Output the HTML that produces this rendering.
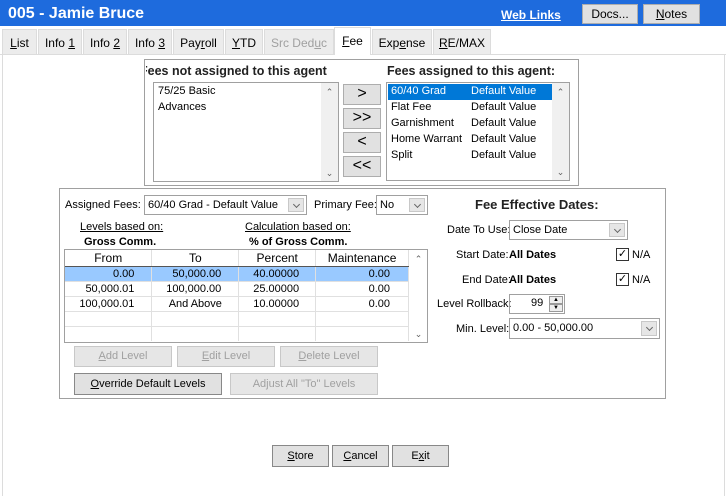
<!DOCTYPE html><html><head><style>
*{box-sizing:border-box;margin:0;padding:0}
body{width:726px;height:496px;background:#fff;font-family:"Liberation Sans",Arial,sans-serif;font-size:11px;color:#000;position:relative;overflow:hidden}
.a{position:absolute}
.btn{position:absolute;background:#e1e1e1;border:1px solid #adadad;text-align:center;font-size:11px}
.dis{color:#a0a0a0;background:#e6e6e6;border-color:#c8c8c8}
.tab{position:absolute;top:29px;height:25px;background:#ececec;border:1px solid #dcdcdc;border-bottom:none;font-size:12px;line-height:26px;text-align:center;white-space:nowrap}
.dd{position:absolute;background:#fff;border:1px solid #a0a0a0;padding-left:3px}
.dd i{position:absolute;right:2px;top:2px;bottom:2px;width:16px;background:#e6e6e6;border:1px solid #c8c8c8}
.dd i:after{content:"";position:absolute;left:5px;top:3px;width:4px;height:4px;border-right:1px solid #666;border-bottom:1px solid #666;transform:rotate(45deg)}
.sb{position:absolute;background:#f0f0f0;width:17px;font-size:9px;color:#606060;text-align:center}
td{border-right:1px solid #e0e0e0;border-bottom:1px solid #e0e0e0;height:15px;padding:0 6px;font-size:11px}
</style></head><body>
<div class="a" style="left:0;top:0;width:726px;height:26px;background:#1e6bdd"></div>
<div class="a" style="left:8px;top:5px;color:#fff;font-weight:bold;font-size:16px">005 - Jamie Bruce</div>
<div class="a" style="left:501px;top:8px;color:#fff;font-weight:bold;font-size:12px;text-decoration:underline">Web Links</div>
<div class="btn" style="left:582px;top:4px;width:56px;height:20px;line-height:18px;font-size:12px">Docs...</div>
<div class="btn" style="left:643px;top:4px;width:57px;height:20px;line-height:18px;font-size:12px"><u>N</u>otes</div>
<div class="tab" style="left:2px;width:35px"><u>L</u>ist</div>
<div class="tab" style="left:38px;width:44px">Info <u>1</u></div>
<div class="tab" style="left:83px;width:44px">Info <u>2</u></div>
<div class="tab" style="left:128px;width:44px">Info <u>3</u></div>
<div class="tab" style="left:173px;width:51px">Pay<u>r</u>oll</div>
<div class="tab" style="left:225px;width:38px"><u>Y</u>TD</div>
<div class="tab" style="left:264px;width:70px;color:#a0a0a0">Src Ded<u>u</u>c</div>
<div class="tab" style="left:334px;width:37px;background:#fff;top:27px;height:28px;z-index:2"><u>F</u>ee</div>
<div class="tab" style="left:372px;width:60px">Exp<u>e</u>nse</div>
<div class="tab" style="left:433px;width:58px"><u>R</u>E/MAX</div>
<div class="a" style="left:0;top:54px;width:726px;height:1px;background:#dcdcdc"></div>
<div class="a" style="left:2px;top:54px;width:1px;height:442px;background:#dcdcdc"></div>
<div class="a" style="left:724px;top:54px;width:1px;height:442px;background:#dcdcdc"></div>

<div class="a" style="left:144px;top:59px;width:435px;height:127px;border:1px solid #a0a0a0"></div>
<div class="a" style="left:146px;top:64px;width:193px;height:16px;overflow:hidden"><div class="a" style="left:-6px;top:0;font-weight:bold;font-size:12.5px;color:#222;white-space:nowrap">Fees not assigned to this agent</div></div>
<div class="a" style="left:153px;top:82px;width:186px;height:100px;border:1px solid #a0a0a0"></div>
<div class="a" style="left:158px;top:85px">75/25 Basic</div>
<div class="a" style="left:158px;top:101px">Advances</div>
<div class="sb" style="left:321px;top:83px;height:98px"><div style="margin-top:4px">&#8963;</div><div style="position:absolute;bottom:2px;width:17px">&#8964;</div></div>
<div class="btn" style="left:343px;top:84px;width:38px;height:21px;font-size:16px;line-height:18px">&gt;</div>
<div class="btn" style="left:343px;top:108px;width:38px;height:21px;font-size:16px;line-height:18px">&gt;&gt;</div>
<div class="btn" style="left:343px;top:132px;width:38px;height:21px;font-size:16px;line-height:18px">&lt;</div>
<div class="btn" style="left:343px;top:156px;width:38px;height:21px;font-size:16px;line-height:18px">&lt;&lt;</div>
<div class="a" style="left:387px;top:64px;font-weight:bold;font-size:12.5px;color:#222">Fees assigned to this agent:</div>
<div class="a" style="left:386px;top:82px;width:184px;height:99px;border:1px solid #a0a0a0"></div>
<div class="a" style="left:388px;top:84px;width:164px;height:16px;background:#0078d7"></div>
<div class="a" style="left:391px;top:85px;color:#fff">60/40 Grad</div><div class="a" style="left:471px;top:85px;color:#fff">Default Value</div>
<div class="a" style="left:391px;top:101px">Flat Fee</div><div class="a" style="left:471px;top:101px">Default Value</div>
<div class="a" style="left:391px;top:117px">Garnishment</div><div class="a" style="left:471px;top:117px">Default Value</div>
<div class="a" style="left:391px;top:133px">Home Warrant</div><div class="a" style="left:471px;top:133px">Default Value</div>
<div class="a" style="left:391px;top:149px">Split</div><div class="a" style="left:471px;top:149px">Default Value</div>
<div class="sb" style="left:552px;top:83px;height:97px"><div style="margin-top:4px">&#8963;</div><div style="position:absolute;bottom:2px;width:17px">&#8964;</div></div>

<div class="a" style="left:59px;top:188px;width:607px;height:211px;border:1px solid #a0a0a0"></div>
<div class="a" style="left:65px;top:199px">Assigned Fees:</div>
<div class="dd" style="left:144px;top:195px;width:163px;height:20px;line-height:18px">60/40 Grad - Default Value<i></i></div>
<div class="a" style="left:314px;top:199px">Primary Fee:</div>
<div class="dd" style="left:376px;top:195px;width:52px;height:20px;line-height:18px">No<i></i></div>
<div class="a" style="left:80px;top:221px;text-decoration:underline">Levels based on:</div>
<div class="a" style="left:245px;top:221px;text-decoration:underline">Calculation based on:</div>
<div class="a" style="left:84px;top:236px;font-weight:bold">Gross Comm.</div>
<div class="a" style="left:249px;top:236px;font-weight:bold">% of Gross Comm.</div>
<div class="a" style="left:64px;top:249px;width:364px;height:94px;border:1px solid #a0a0a0"></div>
<table class="a" style="left:65px;top:250px;border-collapse:collapse;width:344px">
<tr style="height:16px;font-size:12px"><td style="width:87px;text-align:center;font-size:12px;border-bottom:1px solid #555">From</td><td style="width:87px;text-align:center;font-size:12px;border-bottom:1px solid #555">To</td><td style="width:77px;text-align:center;font-size:12px;border-bottom:1px solid #555">Percent</td><td style="width:93px;text-align:center;font-size:12px;border-bottom:1px solid #555">Maintenance</td></tr>
<tr style="background:#99c9ff"><td style="text-align:right;padding-right:17px">0.00</td><td style="text-align:right;padding-right:17px">50,000.00</td><td style="padding-left:14px">40.00000</td><td style="text-align:right;padding-right:18px">0.00</td></tr>
<tr><td style="text-align:right;padding-right:17px">50,000.01</td><td style="text-align:right;padding-right:17px">100,000.00</td><td style="padding-left:14px">25.00000</td><td style="text-align:right;padding-right:18px">0.00</td></tr>
<tr><td style="text-align:right;padding-right:17px">100,000.01</td><td style="text-align:center">And Above</td><td style="padding-left:14px">10.00000</td><td style="text-align:right;padding-right:18px">0.00</td></tr>
<tr><td></td><td></td><td></td><td></td></tr>
<tr><td style="border-bottom:none"></td><td style="border-bottom:none"></td><td style="border-bottom:none"></td><td style="border-bottom:none"></td></tr>
</table>
<div class="sb" style="left:410px;top:250px;height:92px;background:#fff"><div style="margin-top:4px">&#8963;</div><div style="position:absolute;bottom:2px;width:17px">&#8964;</div></div>
<div class="btn dis" style="left:74px;top:346px;width:98px;height:21px;line-height:19px"><u>A</u>dd Level</div>
<div class="btn dis" style="left:177px;top:346px;width:98px;height:21px;line-height:19px"><u>E</u>dit Level</div>
<div class="btn dis" style="left:280px;top:346px;width:98px;height:21px;line-height:19px"><u>D</u>elete Level</div>
<div class="btn" style="left:74px;top:373px;width:148px;height:22px;line-height:20px;border-color:#888"><u>O</u>verride Default Levels</div>
<div class="btn dis" style="left:230px;top:373px;width:148px;height:22px;line-height:20px">Adjust All "To" Levels</div>

<div class="a" style="left:475px;top:197px;font-weight:bold;font-size:13px;color:#222">Fee Effective Dates:</div>
<div class="a" style="left:447px;top:224px">Date To Use:</div>
<div class="dd" style="left:509px;top:220px;width:119px;height:20px;line-height:18px">Close Date<i></i></div>
<div class="a" style="left:456px;top:249px">Start Date:</div><div class="a" style="left:509px;top:249px;font-weight:bold">All Dates</div>
<div class="a" style="left:616px;top:248px;width:13px;height:13px;border:1px solid #333;font-size:11px;line-height:11px;text-align:center">&#10003;</div><div class="a" style="left:632px;top:249px">N/A</div>
<div class="a" style="left:462px;top:274px">End Date:</div><div class="a" style="left:509px;top:274px;font-weight:bold">All Dates</div>
<div class="a" style="left:616px;top:273px;width:13px;height:13px;border:1px solid #333;font-size:11px;line-height:11px;text-align:center">&#10003;</div><div class="a" style="left:632px;top:274px">N/A</div>
<div class="a" style="left:437px;top:298px">Level Rollback:</div>
<div class="a" style="left:509px;top:294px;width:56px;height:20px;border:1px solid #a0a0a0"></div>
<div class="a" style="left:531px;top:297px">99</div>
<div class="a" style="left:549px;top:296px;width:14px;height:8px;border:1px solid #999;background:#eee;font-size:6px;text-align:center;line-height:7px">&#9650;</div>
<div class="a" style="left:549px;top:304px;width:14px;height:8px;border:1px solid #999;background:#eee;font-size:6px;text-align:center;line-height:7px">&#9660;</div>
<div class="a" style="left:456px;top:323px">Min. Level:</div>
<div class="dd" style="left:509px;top:318px;width:151px;height:21px;line-height:19px">0.00 - 50,000.00<i></i></div>

<div class="btn" style="left:272px;top:445px;width:57px;height:22px;line-height:20px;border-color:#888"><u>S</u>tore</div>
<div class="btn" style="left:332px;top:445px;width:57px;height:22px;line-height:20px;border-color:#888"><u>C</u>ancel</div>
<div class="btn" style="left:392px;top:445px;width:57px;height:22px;line-height:20px;border-color:#888">E<u>x</u>it</div>
</body></html>
